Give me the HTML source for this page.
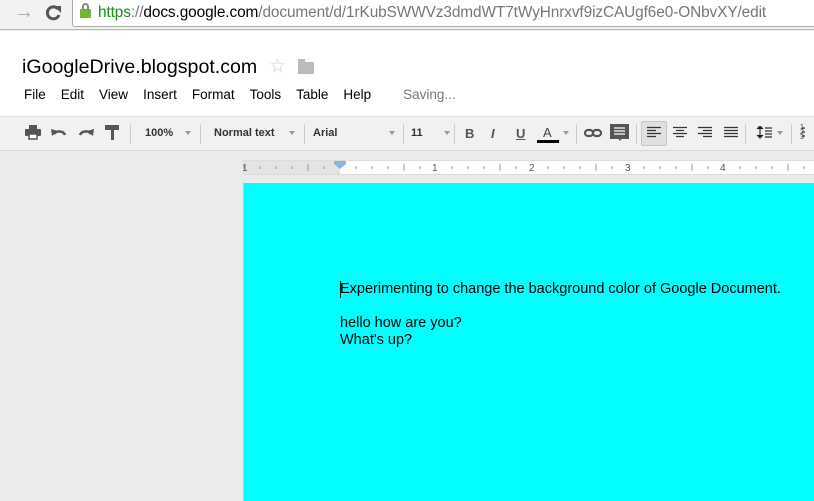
<!DOCTYPE html>
<html><head><meta charset="utf-8"><style>
*{margin:0;padding:0;box-sizing:border-box}
body{width:814px;height:501px;overflow:hidden;background:#ebebeb;font-family:"Liberation Sans",Arial,sans-serif;position:relative}
.a{position:absolute}
#chrome{left:0;top:0;width:814px;height:30px;background:#f2f2f2;border-bottom:1px solid #b8b8b8}
#url{left:72px;top:0;width:750px;height:27px;background:#fff;border:1px solid #a9a9a9;border-top:none;border-radius:0 0 0 3px;font-size:15.4px;line-height:25px;padding-left:25px;color:#777;white-space:nowrap;letter-spacing:-0.1px}
#hdr{left:0;top:31px;width:814px;height:85px;background:#fff}
#title{left:22px;top:56px;font-size:19.6px;color:#000}
#menu{left:24px;top:87px;font-size:13.5px;color:#000;white-space:nowrap}
#menu span{margin-right:15px}
#tb{left:0;top:116px;width:814px;height:35px;background:#f1f1f1;border-top:1px solid #e0e0e0;border-bottom:1px solid #d9d9d9}
.t{position:absolute;top:127px;font-size:11px;color:#333;font-weight:bold}
.sep{position:absolute;top:124px;width:1px;height:20px;background:#ccc}
.dd{position:absolute;top:131px;border:3px solid transparent;border-top:4px solid #999;width:0;height:0}
#ruler{left:243px;top:160px;width:571px;height:15px;background:#fff;border-top:1px solid #ddd;border-bottom:1px solid #ddd}
#page{left:243px;top:183px;width:571px;height:318px;background:#00ffff;border-left:1px solid #c8c8c8}
.txt{position:absolute;left:340px;font-size:14.5px;color:#000}
</style></head><body>
<div id="chrome" class="a"></div>
<div class="a" style="left:14px;top:1px;font-size:20px;color:#aaa">→</div>
<svg class="a" style="left:44px;top:4px" width="18" height="18"><path d="M14 5A6 6 0 1 0 15 11" fill="none" stroke="#555" stroke-width="3"/><path d="M10 2L17 2L17 9Z" fill="#555"/></svg>
<div id="url" class="a"><span style="color:#1a8a1a">https</span>://<span style="color:#000">docs.google.com</span>/document/d/1rKubSWWVz3dmdWT7tWyHnrxvf9izCAUgf6e0-ONbvXY/edit</div>
<div class="a" style="left:80px;top:9px;width:11px;height:9px;background:#6fb82b;border-radius:1px"></div>
<div class="a" style="left:82px;top:3px;width:7px;height:8px;border:2px solid #888;border-bottom:none;border-radius:4px 4px 0 0"></div>
<div id="hdr" class="a"></div>
<div id="title" class="a">iGoogleDrive.blogspot.com</div>
<div class="a" style="left:269px;top:55px;font-size:19px;color:#ccc">☆</div>
<div class="a" style="left:298px;top:62px;width:16px;height:12px;background:#bbb;border-radius:1px"></div>
<div class="a" style="left:298px;top:59px;width:7px;height:4px;background:#bbb"></div>
<div id="menu" class="a"><span>File</span><span>Edit</span><span>View</span><span>Insert</span><span>Format</span><span>Tools</span><span>Table</span><span>Help</span><span style="color:#777;margin-left:17px">Saving...</span></div>
<div id="tb" class="a"></div>
<svg class="a" style="left:25px;top:125px" width="16" height="15"><rect x="4" y="0" width="8" height="4" fill="#555"/><rect x="0" y="4" width="16" height="7" rx="1" fill="#555"/><rect x="4" y="9" width="8" height="5" fill="#fff" stroke="#555" stroke-width="1.5"/></svg>
<svg class="a" style="left:51px;top:126px" width="16" height="12"><path d="M3 8A6 5 0 0 1 14 9" fill="none" stroke="#555" stroke-width="2.5"/><path d="M0 3L7 5L1 10Z" fill="#555"/></svg>
<svg class="a" style="left:78px;top:126px" width="16" height="12"><path d="M13 8A6 5 0 0 0 2 9" fill="none" stroke="#555" stroke-width="2.5"/><path d="M16 3L9 5L15 10Z" fill="#555"/></svg>
<div class="a" style="left:105px;top:125px;width:14px;height:5px;background:#555"></div>
<div class="a" style="left:111px;top:130px;width:3px;height:10px;background:#555"></div>
<div class="sep" style="left:130px"></div>
<div class="t" style="left:145px">100%</div><div class="dd" style="left:185px"></div>
<div class="sep" style="left:200px"></div>
<div class="t" style="left:214px">Normal text</div><div class="dd" style="left:289px"></div>
<div class="sep" style="left:304px"></div>
<div class="t" style="left:313px">Arial</div><div class="dd" style="left:389px"></div>
<div class="sep" style="left:403px"></div>
<div class="t" style="left:411px">11</div><div class="dd" style="left:444px"></div>
<div class="sep" style="left:454px"></div>
<div class="t" style="left:465px;font-size:13px;color:#555;top:126px">B</div>
<div class="t" style="left:491px;font-size:13px;color:#555;font-style:italic;top:126px">I</div>
<div class="t" style="left:516px;font-size:13px;color:#555;text-decoration:underline;top:126px">U</div>
<div class="t" style="left:543px;font-size:13px;color:#444;font-weight:normal;top:125px">A</div>
<div class="a" style="left:537px;top:140px;width:22px;height:3px;background:#000"></div>
<div class="dd" style="left:563px"></div>
<div class="sep" style="left:576px"></div>
<svg class="a" style="left:583px;top:126px" width="20" height="14"><rect x="2" y="4" width="8" height="6" rx="3" fill="none" stroke="#555" stroke-width="2.2"/><rect x="10" y="4" width="8" height="6" rx="3" fill="none" stroke="#555" stroke-width="2.2"/></svg>
<svg class="a" style="left:610px;top:124px" width="19" height="17"><path d="M0 0H19V15H12L9 17V15H0Z" fill="#555"/><path d="M4 4H15M4 7H15M4 10H15" stroke="#fff" stroke-width="1.3"/></svg>
<div class="sep" style="left:636px"></div>
<div class="a" style="left:641px;top:121px;width:26px;height:25px;background:#e0e0e0;border:1px solid #c6c6c6;border-radius:2px"></div>
<svg class="a" style="left:645px;top:126px" width="160" height="14" stroke="#333" stroke-width="1.2">
<path d="M2 1.5H16M2 4.5H11M2 7.5H16M2 10.5H11"/>
<path d="M28 1.5H42M31 4.5H39M28 7.5H42M31 10.5H39"/>
<path d="M53 1.5H67M58 4.5H67M53 7.5H67M58 10.5H67"/>
<path d="M79 1.5H93M79 4.5H93M79 7.5H93M79 10.5H93"/>
<path d="M115 0V12M112 3L115 0L118 3M112 9L115 12L118 9M120 2H127M120 5H127M120 8H127M120 11H127"/>
<path d="M157 2H160M157 6H160M157 10H160" />
</svg>
<div class="dd" style="left:777px"></div>
<div class="sep" style="left:745px"></div><div class="sep" style="left:791px"></div>
<div class="a" style="left:800px;top:125px;font-size:7px;color:#333;line-height:5px">1<br>2<br>3</div>
<div id="ruler" class="a">
<div class="a" style="left:0;top:0;width:97px;height:13px;background:#e4e4e4"></div>
<svg class="a" style="left:0;top:0" width="571" height="13">
<g stroke="#999" stroke-width="1">
<path d="M1 5V8M17 5V8M33 5V8M49 5V8M65 3V10M81 5V8M113 5V8M129 5V8M145 5V8M161 3V10M177 5V8M209 5V8M225 5V8M241 5V8M257 3V10M273 5V8M305 5V8M321 5V8M337 5V8M353 3V10M369 5V8M401 5V8M417 5V8M433 5V8M449 3V10M465 5V8M497 5V8M513 5V8M529 5V8M545 3V10M561 5V8"/>
</g>
<path d="M91 0H103V3L97 8L91 3Z" fill="#8cb4e8"/>
<g font-size="10" fill="#555" font-family="Liberation Sans"><text x="-1" y="10">1</text><text x="189" y="10">1</text><text x="286" y="10">2</text><text x="382" y="10">3</text><text x="477" y="10">4</text></g>
</svg></div>
<div id="page" class="a"></div>
<div class="a" style="left:340px;top:281px;width:1px;height:17px;background:#000"></div>
<div class="txt" style="top:281px">Experimenting to change the background color of Google Document.</div>
<div class="txt" style="top:315px">hello how are you?</div>
<div class="txt" style="top:332px">What's up?</div>
</body></html>
